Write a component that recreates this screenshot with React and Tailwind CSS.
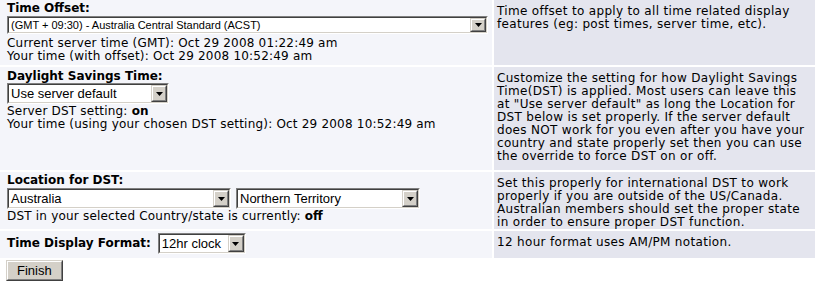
import React from "react";

const verdana = { fontFamily: '"DejaVu Sans", Verdana, sans-serif' };

// classic windows style dropdown (drawn with divs so it looks like the old XP-classic one)
function Arrow() {
  return (
    <div className="h-full w-[16px] shrink-0 border border-t-[#d4d0c8] border-l-[#d4d0c8] border-b-[#404040] border-r-[#404040]">
      <div className="flex h-full w-full items-center justify-center bg-[#d4d0c8] border border-t-white border-l-white border-b-[#808080] border-r-[#808080]">
        <svg width="7" height="4" viewBox="0 0 7 4">
          <path d="M0 0h7L3.5 4z" fill="#000" />
        </svg>
      </div>
    </div>
  );
}

function Select({ value, className, textClass }) {
  return (
    <div className={`shrink-0 border border-t-[#808080] border-l-[#808080] border-b-white border-r-white ${className}`}>
      <div className="flex h-full items-stretch bg-white border border-t-[#404040] border-l-[#404040] border-b-[#d4d0c8] border-r-[#d4d0c8]">
        <div className={`flex-1 truncate pl-[2px] font-['Liberation_Sans',Arial,sans-serif] tracking-normal text-black ${textClass}`}>
          {value}
        </div>
        <Arrow />
      </div>
    </div>
  );
}

const rows = [
  {
    left: (
      <>
        <div className="font-bold tracking-normal">Time Offset:</div>
        <Select
          value="(GMT + 09:30) - Australia Central Standard (ACST)"
          className="mt-[1px] h-[18px] w-[481px]"
          textClass="text-[11px] leading-[14px]"
        />
        <div className="mt-[3px]">Current server time (GMT): Oct 29 2008 01:22:49 am</div>
        <div>Your time (with offset): Oct 29 2008 10:52:49 am</div>
      </>
    ),
    right:
      "Time offset to apply to all time related display features (eg: post times, server time, etc).",
    h: "h-[65px]",
  },
  {
    left: (
      <>
        <div className="mt-[1px] font-bold tracking-normal">Daylight Savings Time:</div>
        <Select
          value="Use server default"
          className="h-[21px] w-[162px]"
          textClass="text-[13px] leading-[17px]"
        />
        <div className="mt-[1px]">
          Server DST setting: <b className="tracking-normal">on</b>
        </div>
        <div>Your time (using your chosen DST setting): Oct 29 2008 10:52:49 am</div>
      </>
    ),
    right:
      'Customize the setting for how Daylight Savings Time(DST) is applied. Most users can leave this at "Use server default" as long the Location for DST below is set properly. If the server default does NOT work for you even after you have your country and state properly set then you can use the override to force DST on or off.',
    h: "h-[103px]",
  },
  {
    left: (
      <>
        <div className="font-bold tracking-normal">Location for DST:</div>
        <div className="mt-[1px] flex gap-[5px]">
          <Select value="Australia" className="h-[21px] w-[224px]" textClass="text-[13px] leading-[17px]" />
          <Select value="Northern Territory" className="h-[21px] w-[184px]" textClass="text-[13px] leading-[17px]" />
        </div>
        <div className="mt-[1px]">
          DST in your selected Country/state is currently: <b className="tracking-normal">off</b>
        </div>
      </>
    ),
    right:
      "Set this properly for international DST to work properly if you are outside of the US/Canada. Australian members should set the proper state in order to ensure proper DST function.",
    h: "h-[57px]",
  },
  {
    left: (
      <div className="flex items-center gap-[7px]">
        <span className="font-bold tracking-normal">Time Display Format:</span>
        <Select value="12hr clock" className="h-[21px] w-[88px]" textClass="text-[13px] leading-[17px]" />
      </div>
    ),
    right: "12 hour format uses AM/PM notation.",
    h: "h-[27px]",
  },
];

export default function App() {
  return (
    <div className="h-[283px] w-[815px] bg-white text-[12px] leading-[13px] tracking-[0.2px] text-black" style={verdana}>
      <div className="grid grid-cols-[492px_321px] gap-[2px]">
        {rows.map((r, i) => (
          <React.Fragment key={i}>
            <div className={`bg-[#f4f5fa] pl-[7px] pt-[2px] ${r.h}`}>{r.left}</div>
            <div className={`bg-[#e4e5ee] pl-[3px] pr-[2px] pt-[5px] tracking-[0.32px] ${r.h}`}>{r.right}</div>
          </React.Fragment>
        ))}
      </div>
      <div className="pl-[6px] pt-[2px]">
        <div className="inline-block border border-t-[#d4d0c8] border-l-[#d4d0c8] border-b-[#404040] border-r-[#404040]">
          <div className="h-[19px] bg-[#d4d0c8] px-[9px] border border-t-white border-l-white border-b-[#808080] border-r-[#808080] font-['Liberation_Sans',Arial,sans-serif] text-[13px] leading-[17px] tracking-normal">
            Finish
          </div>
        </div>
      </div>
    </div>
  );
}
